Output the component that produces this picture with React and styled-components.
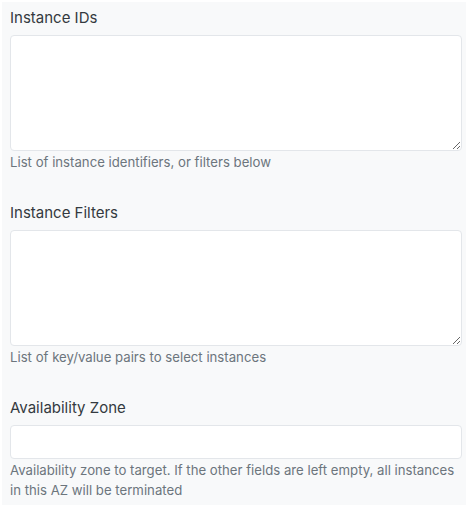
import React from 'react';
import styled, { createGlobalStyle } from 'styled-components';

const GlobalStyle = createGlobalStyle`
  html, body {
    margin: 0;
    padding: 0;
    background: #ffffff;
  }
  body {
    font-family: Inter, "Liberation Sans", Arial, sans-serif;
    color: #212529;
  }
`;

const Panel = styled.div`
  box-sizing: border-box;
  width: 464px;
  margin: 2px 0 0 2px;
  padding: 4px 4px 5px 8px;
  background: #f8f9fa;
  display: flex;
  flex-direction: column;
  gap: 29px;
`;

const Field = styled.div`
  display: flex;
  flex-direction: column;
`;

const Label = styled.label`
  font-size: 15px;
  line-height: 24px;
  color: #343a40;
  margin-bottom: 5px;
`;

const TextArea = styled.textarea`
  box-sizing: border-box;
  display: block;
  width: 100%;
  height: 116px;
  margin: 0;
  padding: 6px 12px;
  border: 1px solid #e3e6ea;
  border-radius: 4px;
  background: #ffffff;
  font-family: inherit;
  font-size: 15px;
  resize: vertical;
  outline: none;
`;

const Input = styled.input`
  box-sizing: border-box;
  display: block;
  width: 100%;
  height: 34px;
  margin: 0;
  padding: 6px 12px;
  border: 1px solid #e3e6ea;
  border-radius: 4px;
  background: #ffffff;
  font-family: inherit;
  font-size: 15px;
  outline: none;
`;

const Help = styled.div`
  font-size: 13.2px;
  line-height: 20px;
  color: #6c757d;
  margin-top: 1px;
`;

export default function App() {
  return (
    <>
      <GlobalStyle />
      <Panel>
        <Field>
          <Label>Instance IDs</Label>
          <TextArea />
          <Help>List of instance identifiers, or filters below</Help>
        </Field>
        <Field>
          <Label>Instance Filters</Label>
          <TextArea />
          <Help>List of key/value pairs to select instances</Help>
        </Field>
        <Field>
          <Label>Availability Zone</Label>
          <Input type="text" />
          <Help>
            Availability zone to target. If the other fields are left empty, all instances
            in this AZ will be terminated
          </Help>
        </Field>
      </Panel>
    </>
  );
}
